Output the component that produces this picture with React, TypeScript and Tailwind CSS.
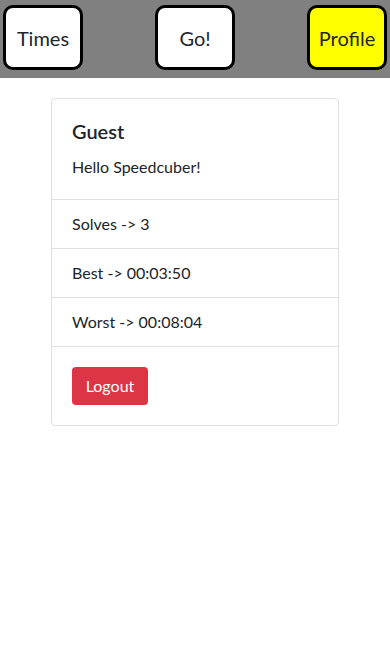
export default function App() {
  const font = { fontFamily: "Lato, 'Noto Sans', sans-serif" };
  return (
    <div className="min-h-[658px] bg-white text-[#212529]" style={font}>
      <div className="flex h-[78px] items-start justify-between bg-[#808080] px-[3px] pt-[5px]">
        {[
          { t: "Times", bg: "bg-white" },
          { t: "Go!", bg: "bg-white" },
          { t: "Profile", bg: "bg-[#ffff00]" },
        ].map((b) => (
          <button
            key={b.t}
            className={`flex h-[65px] w-[80px] items-center justify-center rounded-[10px] border-[3px] border-black text-[20px] text-[#212529] ${b.bg}`}
          >
            {b.t}
          </button>
        ))}
      </div>
      <div className="flex justify-center pt-[20px]">
        <div className="w-[288px] rounded-[4px] border border-[#dfdfdf] bg-white">
          <div className="p-[20px]">
            <h5 className="mb-[12px] text-[20px] font-semibold leading-[24px]">Guest</h5>
            <p className="text-[16px] leading-[24px]">Hello Speedcuber!</p>
          </div>
          <ul className="border-t border-[#dfdfdf]">
            <li className="border-b border-[#dfdfdf] px-[20px] py-[12px] text-[16px] leading-[24px]">Solves -&gt; 3</li>
            <li className="border-b border-[#dfdfdf] px-[20px] py-[12px] text-[16px] leading-[24px]">Best -&gt; 00:03:50</li>
            <li className="border-b border-[#dfdfdf] px-[20px] py-[12px] text-[16px] leading-[24px]">Worst -&gt; 00:08:04</li>
          </ul>
          <div className="p-[20px]">
            <button className="flex h-[38px] w-[76px] items-center justify-center rounded-[4px] bg-[#dc3545] text-[16px] leading-[24px] text-white">
              Logout
            </button>
          </div>
        </div>
      </div>
    </div>
  );
}
